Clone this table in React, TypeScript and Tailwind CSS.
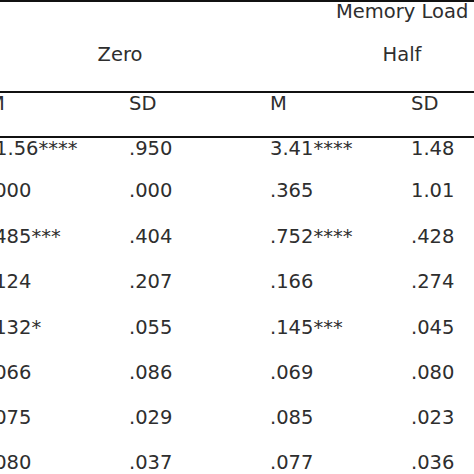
const cols = "grid grid-cols-[141px_141px_141px_141px] -ml-[21px]";

const rows = [
  ["-1.56****", ".950", "3.41****", "1.48"],
  [".000", ".000", ".365", "1.01"],
  [".485***", ".404", ".752****", ".428"],
  [".124", ".207", ".166", ".274"],
  [".132*", ".055", ".145***", ".045"],
  [".066", ".086", ".069", ".080"],
  [".075", ".029", ".085", ".023"],
  [".080", ".037", ".077", ".036"],
];

// row heights follow the source's slightly uneven spacing
const heights = ["h-[42px]", "h-[46px]", "h-[45px]", "h-[46px]", "h-[45px]", "h-[45px]", "h-[45px]", "h-[45px]"];

export default function App() {
  return (
    <div className="w-[474px] h-[474px] overflow-hidden bg-white text-[#2e2e2e] text-[19.5px] leading-[22px] font-['DejaVu_Sans',sans-serif]">
      <div className="border-t-2 border-[#111]">
        {/* Memory Load */}
        <div className="h-[20px] flex items-center pl-[336px] whitespace-nowrap">Memory Load</div>

        {/* Zero / Half */}
        <div className="h-[71px] pb-[3px] border-b-2 border-[#111] flex items-center">
          <div className="grid grid-cols-[282px_282px] -ml-[21px] shrink-0">
            <div className="text-center">Zero</div>
            <div className="text-center">Half</div>
          </div>
        </div>

        {/* M / SD */}
        <div className="h-[45px] border-b-2 border-[#111]">
          <div className={cols}>
            {["M", "SD", "M", "SD"].map((h, i) => (
              <div key={i} className="pl-[9px] whitespace-nowrap">{h}</div>
            ))}
          </div>
        </div>

        {/* Data */}
        {rows.map((r, ri) => (
          <div key={ri} className={heights[ri]}>
            <div className={cols}>
              {r.map((v, ci) => (
                <div key={ci} className="pl-[9px] whitespace-nowrap">{v}</div>
              ))}
            </div>
          </div>
        ))}
      </div>
    </div>
  );
}
